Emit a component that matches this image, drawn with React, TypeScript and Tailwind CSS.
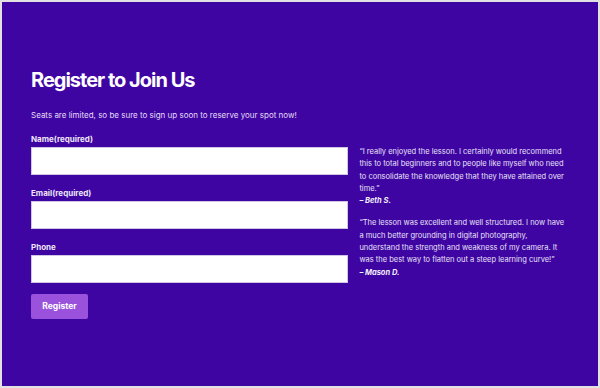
import React from 'react';

const testimonials = [
  {
    quote:
      '“I really enjoyed the lesson. I certainly would recommend this to total beginners and to people like myself who need to consolidate the knowledge that they have attained over time.”',
    author: '– Beth S.',
  },
  {
    quote:
      '“The lesson was excellent and well structured. I now have a much better grounding in digital photography, understand the strength and weakness of my camera. It was the best way to flatten out a steep learning curve!”',
    author: '– Mason D.',
  },
];

const fields = ['Name(required)', 'Email(required)', 'Phone'];

const App: React.FC = () => {
  return (
    <div className="w-[600px] h-[388px] bg-[#e2e2e2] p-[2px] font-['Inter',sans-serif]">
      <div className="h-full bg-[#3f05a3] px-[29px] pt-[66px]">
        <h1 className="text-[20px] leading-[24px] font-bold tracking-tighter text-white">Register to Join Us</h1>
        <p className="mt-[17px] text-[8px] leading-[12px] text-[#e4dcf4]">
          Seats are limited, so be sure to sign up soon to reserve your spot now!
        </p>

        <div className="mt-[12px] flex gap-[11px]">
          {/* Form */}
          <form className="w-[318px]" onSubmit={(e) => e.preventDefault()}>
            {fields.map((label) => (
              <div key={label} className="mb-[12px]">
                <label className="block text-[8px] leading-[12px] font-bold text-[#ece6f6] mb-[2px]">
                  {label}
                </label>
                <input
                  type="text"
                  className="block w-full h-[28px] bg-white border border-[#cfc6e6] outline-none"
                />
              </div>
            ))}
            <button
              type="submit"
              className="block mt-[-1px] w-[57px] h-[25px] rounded-[2px] bg-[#9a52dc] text-[8.5px] font-bold text-white"
            >
              Register
            </button>
          </form>

          {/* Testimonials */}
          <div className="w-[210px] pt-[13px]">
            {testimonials.map((t) => (
              <div key={t.author} className="mb-[10px]">
                <p className="text-[7.5px] leading-[12.3px] text-[#e8e2f6]">{t.quote}</p>
                <p className="text-[7.5px] leading-[12.3px] font-bold italic text-[#f2eefa]">{t.author}</p>
              </div>
            ))}
          </div>
        </div>
      </div>
    </div>
  );
};

export default App;
